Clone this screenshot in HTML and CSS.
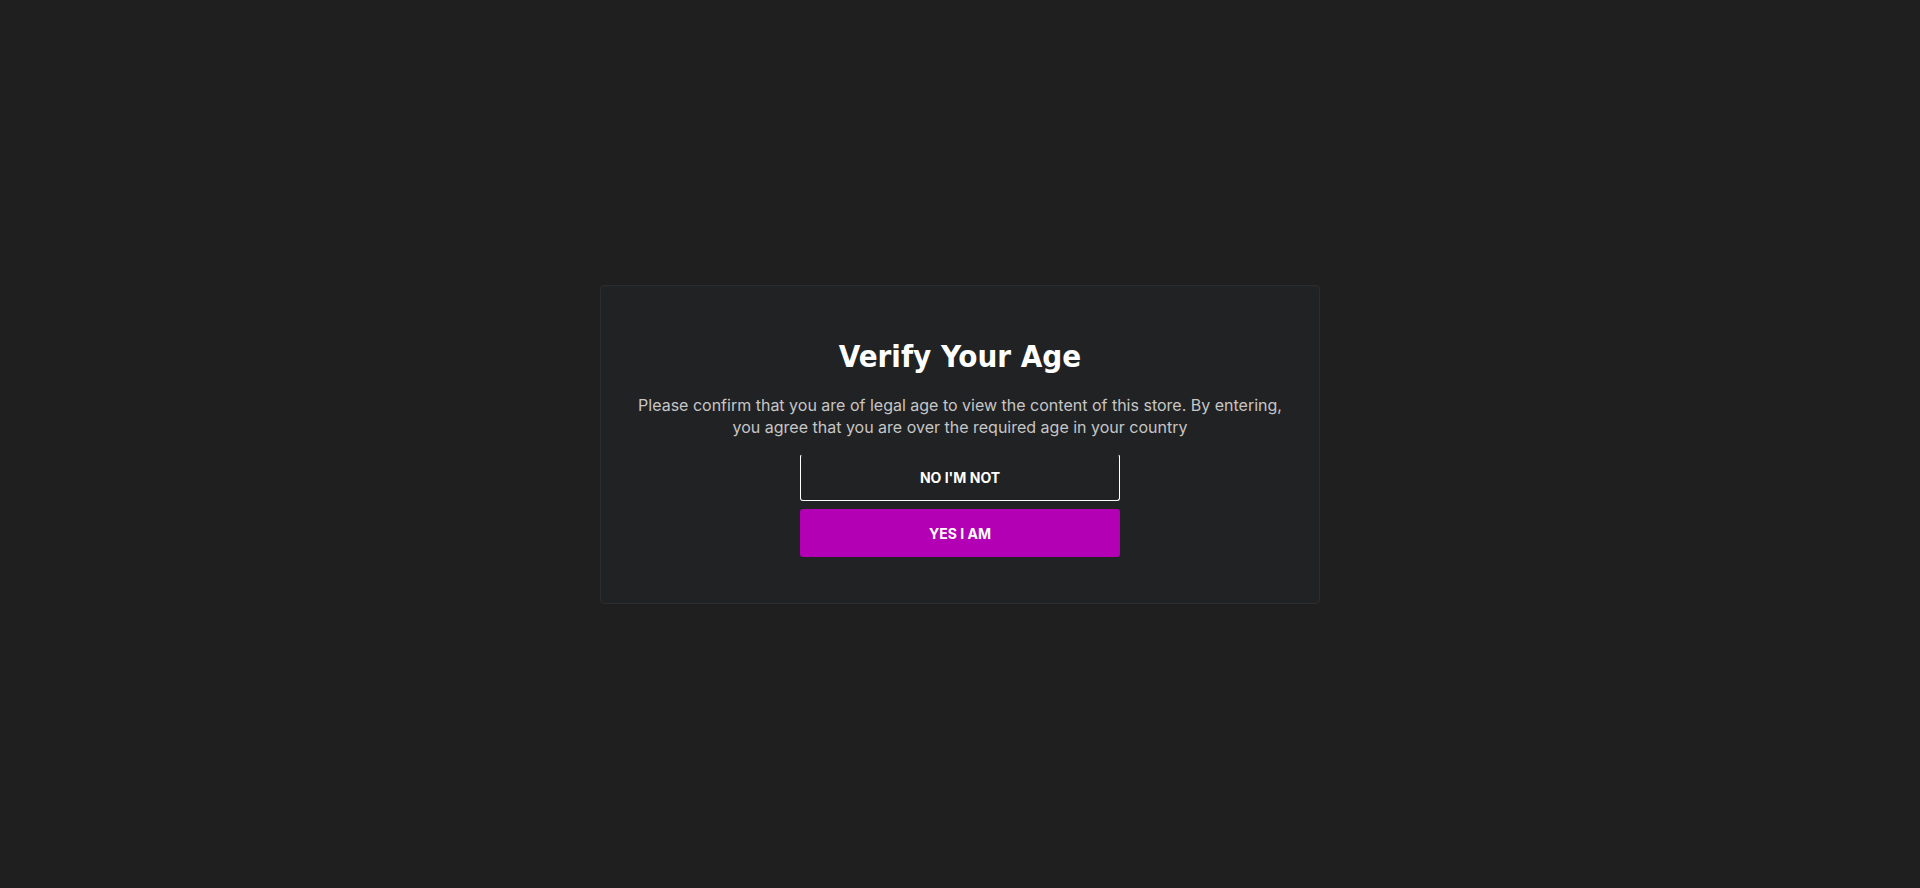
FILE: index.html
```html
<!DOCTYPE html>
<html lang="en">
<head>
<meta charset="utf-8">
<title>Verify Your Age</title>
<link rel="stylesheet" href="styles.css">
</head>
<body>
<div class="overlay">
  <div class="modal">
    <h2 class="title">Verify Your Age</h2>
    <p class="text">Please confirm that you are of legal age to view the content of this store. By entering, you agree that you are over the required age in your country</p>
    <div class="actions">
      <button class="btn btn-outline">NO I'M NOT</button>
      <button class="btn btn-primary">YES I AM</button>
    </div>
  </div>
</div>
</body>
</html>
```
FILE: styles.css
```css
* { box-sizing: border-box; }
html, body { margin: 0; height: 100%; }
body {
  background: #1f1f1f;
  font-family: Inter, "Liberation Sans", sans-serif;
  color: #fff;
}
.overlay {
  height: 888px;
  display: flex;
  justify-content: center;
  padding-top: 285px;
}
.modal {
  width: 720px;
  height: 319px;
  background: #212224;
  border: 1px solid #2c2d30;
  border-radius: 4px;
  padding: 50px 30px 44px;
  display: flex;
  flex-direction: column;
  align-items: center;
}
.title {
  margin: 0;
  font-family: "DejaVu Sans Condensed", "DejaVu Sans", sans-serif;
  font-stretch: condensed;
  font-weight: 700;
  font-size: 31px;
  line-height: 40px;
  letter-spacing: 0;
  color: #fff;
}
.text {
  margin: 18px 0 0;
  font-size: 16px;
  line-height: 22px;
  color: #c6c6c6;
  text-align: center;
}
.actions {
  margin-top: 16px;
  width: 320px;
  display: flex;
  flex-direction: column;
  gap: 8px;
}
.btn {
  height: 47px;
  border-radius: 3px;
  font-family: Inter, "Liberation Sans", sans-serif;
  font-weight: 700;
  font-size: 14px;
  color: #fff;
  cursor: pointer;
}
.btn-outline {
  background: transparent;
  border: 1px solid #fff;
  border-top-color: transparent;
}
.btn-primary {
  height: 48px;
  background: #b300b4;
  border: none;
}
```
